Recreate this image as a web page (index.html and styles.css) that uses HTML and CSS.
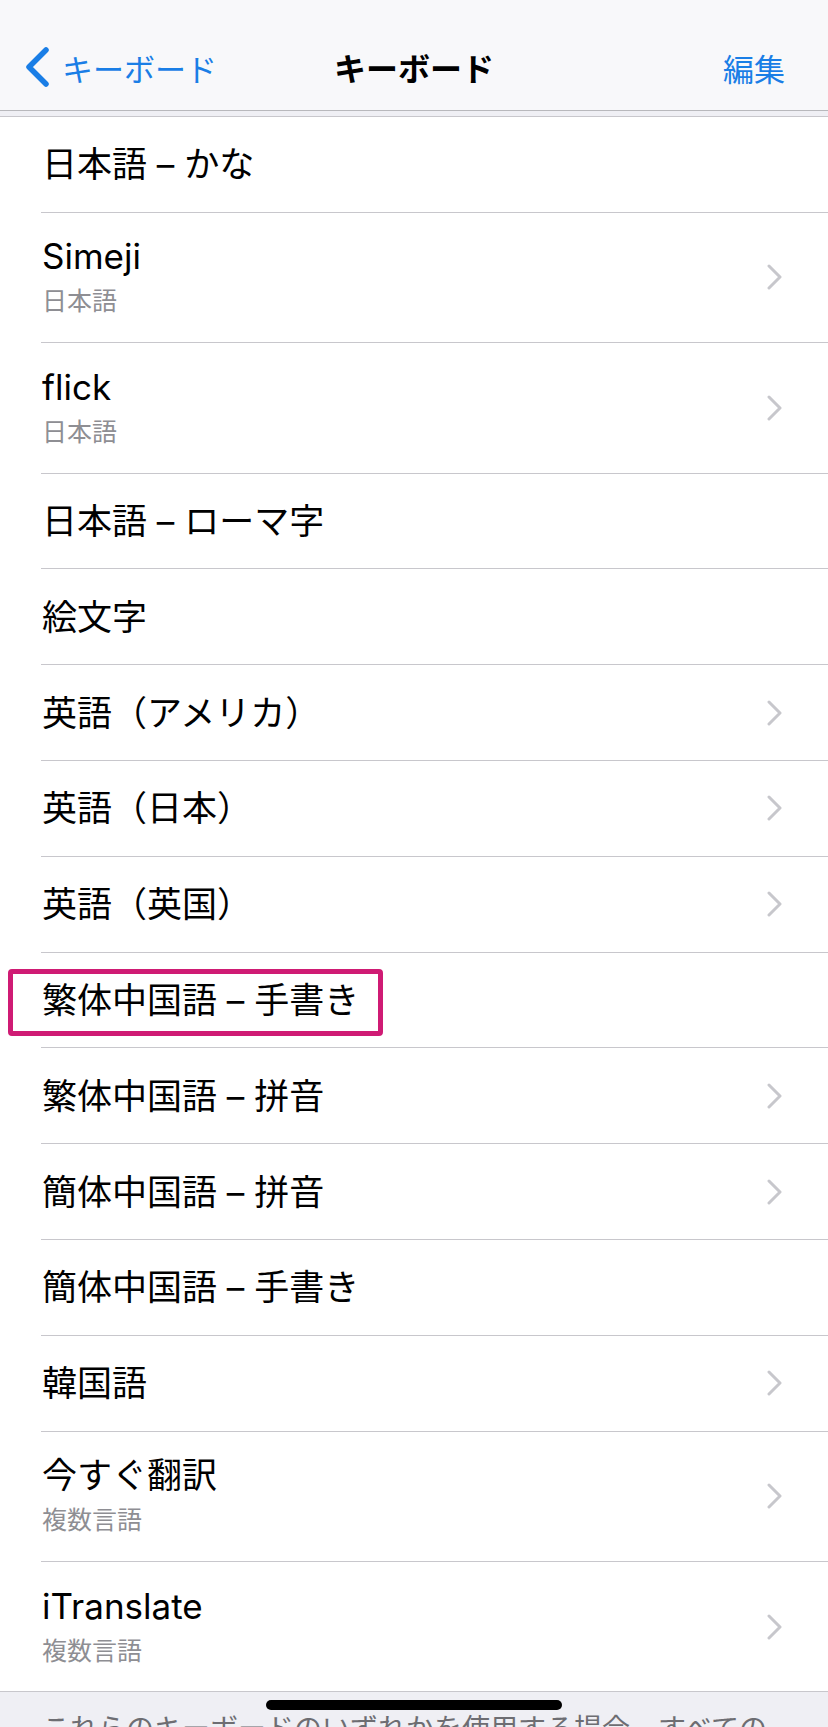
FILE: index.html
```html
<!DOCTYPE html>
<html lang="ja">
<head>
    <meta charset="UTF-8">
    <meta name="viewport" content="width=device-width, initial-scale=1.0">
    <title>キーボード</title>
    <link rel="stylesheet" href="styles.css">
</head>
<body>
    <div class="screen">
        <div class="navbar">
            <div class="nav-back">
                <svg class="back-icon" width="25" height="40" viewBox="0 0 25 40">
                    <polyline points="21,3 4,20 21,37" fill="none" stroke="#1a7ee6" stroke-width="5.5" stroke-linecap="round" stroke-linejoin="round"/>
                </svg>
                <span>キーボード</span>
            </div>
            <div class="nav-title">キーボード</div>
            <div class="nav-edit">編集</div>
        </div>

        <ul class="list">
            <li class="row"><span class="title">日本語 – かな</span></li>
            <li class="row row-sub">
                <div class="label"><span class="title">Simeji</span><span class="sub">日本語</span></div>
                <svg class="chev" width="15" height="26" viewBox="0 0 15 26"><polyline points="2,2 13,13 2,24"/></svg>
            </li>
            <li class="row row-sub">
                <div class="label"><span class="title">flick</span><span class="sub">日本語</span></div>
                <svg class="chev" width="15" height="26" viewBox="0 0 15 26"><polyline points="2,2 13,13 2,24"/></svg>
            </li>
            <li class="row"><span class="title">日本語 – ローマ字</span></li>
            <li class="row"><span class="title">絵文字</span></li>
            <li class="row">
                <span class="title">英語（アメリカ）</span>
                <svg class="chev" width="15" height="26" viewBox="0 0 15 26"><polyline points="2,2 13,13 2,24"/></svg>
            </li>
            <li class="row">
                <span class="title">英語（日本）</span>
                <svg class="chev" width="15" height="26" viewBox="0 0 15 26"><polyline points="2,2 13,13 2,24"/></svg>
            </li>
            <li class="row">
                <span class="title">英語（英国）</span>
                <svg class="chev" width="15" height="26" viewBox="0 0 15 26"><polyline points="2,2 13,13 2,24"/></svg>
            </li>
            <li class="row marked">
                <span class="title">繁体中国語 – 手書き</span>
                <div class="mark-box"></div>
            </li>
            <li class="row">
                <span class="title">繁体中国語 – 拼音</span>
                <svg class="chev" width="15" height="26" viewBox="0 0 15 26"><polyline points="2,2 13,13 2,24"/></svg>
            </li>
            <li class="row">
                <span class="title">簡体中国語 – 拼音</span>
                <svg class="chev" width="15" height="26" viewBox="0 0 15 26"><polyline points="2,2 13,13 2,24"/></svg>
            </li>
            <li class="row"><span class="title">簡体中国語 – 手書き</span></li>
            <li class="row">
                <span class="title">韓国語</span>
                <svg class="chev" width="15" height="26" viewBox="0 0 15 26"><polyline points="2,2 13,13 2,24"/></svg>
            </li>
            <li class="row row-sub">
                <div class="label"><span class="title">今すぐ翻訳</span><span class="sub">複数言語</span></div>
                <svg class="chev" width="15" height="26" viewBox="0 0 15 26"><polyline points="2,2 13,13 2,24"/></svg>
            </li>
            <li class="row row-sub">
                <div class="label"><span class="title">iTranslate</span><span class="sub">複数言語</span></div>
                <svg class="chev" width="15" height="26" viewBox="0 0 15 26"><polyline points="2,2 13,13 2,24"/></svg>
            </li>
        </ul>

        <div class="footer">これらのキーボードのいずれかを使用する場合、すべての</div>

        <div class="home-bar"></div>
    </div>
</body>
</html>
```

FILE: styles.css
```css
body {
    margin: 0;
    background-color: #efeff4;
    font-family: Inter, "Noto Sans CJK JP", sans-serif;
}
.screen {
    position: relative;
    width: 828px;
    height: 1727px;
    overflow: hidden;
    background-color: #efeff4;
}

/* barra di navigazione */
.navbar {
    display: grid;
    grid-template-columns: 1fr auto 1fr;
    align-items: center;
    height: 44px;
    padding: 44px 25px 22px 25px;
    background-color: #f8f8fa;
    border-bottom: 1px solid #b8b8bc;
    font-size: 31px;
}
.nav-back {
    display: flex;
    align-items: center;
    gap: 12px;
    color: #1a7ee6;
}
.back-icon {
    display: block;
}
.nav-title {
    font-size: 32px;
    font-weight: 700;
    color: #000;
}
.nav-edit {
    justify-self: end;
    margin-right: 18px;
    color: #1a7ee6;
}

/* lista */
.list {
    list-style: none;
    margin: 5px 0 0 0;
    padding: 0 0 0 41px;
    background: #fff;
    border-top: 1px solid #c8c7cc;
    border-bottom: 1px solid #c8c7cc;
}
.row {
    position: relative;
    display: flex;
    align-items: center;
    justify-content: space-between;
    box-sizing: border-box;
    height: 95.8px;
    padding: 0 46px 0 1px;
    border-bottom: 1px solid #c8c7cc;
}
.row:last-child {
    border-bottom: none;
    height: 129.4px;
}
.row-sub {
    height: 130.4px;
}
.title {
    font-size: 35px;
    line-height: 40px;
    color: #000;
}
.label {
    display: flex;
    flex-direction: column;
    gap: 10px;
    margin-top: -2px;
}
.sub {
    font-size: 25px;
    line-height: 30px;
    color: #8e8e93;
}
.chev {
    display: block;
    fill: none;
    stroke: #c7c7cc;
    stroke-width: 3;
    stroke-linecap: round;
    stroke-linejoin: round;
}

/* riquadro evidenziato */
.mark-box {
    position: absolute;
    left: -33px;
    top: 16px;
    width: 375px;
    height: 67px;
    box-sizing: border-box;
    border: 5px solid #cf1b74;
    border-radius: 4px;
}

.footer {
    padding: 17px 42px 0 42px;
    font-size: 28px;
    line-height: 40px;
    color: #6d6d72;
}

.home-bar {
    position: absolute;
    left: 266px;
    top: 1700px;
    width: 296px;
    height: 10px;
    border-radius: 5px;
    background: #000;
}
```
